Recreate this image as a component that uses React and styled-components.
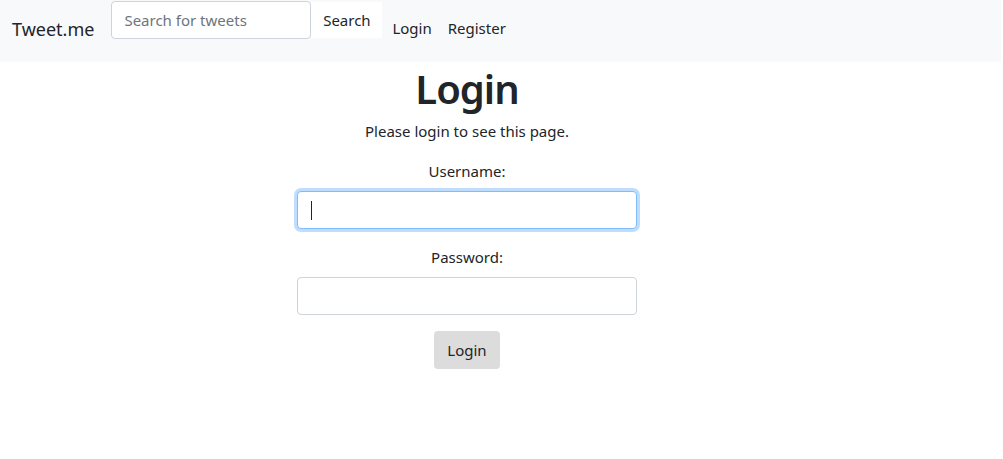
import React from "react";
import styled, { createGlobalStyle } from "styled-components";

const Global = createGlobalStyle`
  html, body { margin: 0; padding: 0; background: #fff; }
  body {
    font-family: "Noto Sans", "Liberation Sans", sans-serif;
    font-size: 15px;
    color: #212529;
  }
  * { box-sizing: border-box; }
`;

const Navbar = styled.nav`
  display: flex;
  align-items: flex-start;
  height: 62px;
  width: 1001px;
  background: #f8f9fa;
  padding: 1px 12px 0;
`;

const Brand = styled.a`
  font-size: 18px;
  color: #212529;
  text-decoration: none;
  margin-top: 16px;
  margin-right: 17px;
`;

const SearchForm = styled.form`
  display: flex;
  align-items: flex-start;
`;

const SearchInput = styled.input`
  width: 200px;
  height: 38px;
  border: 1px solid #ced4da;
  border-radius: 4px;
  padding: 0 12px;
  font-family: inherit;
  font-size: 15px;
  color: #495057;
  background: #fff;
  outline: none;
  &::placeholder { color: #6c757d; }
`;

const SearchButton = styled.button`
  height: 36px;
  margin-top: 1px;
  width: 71px;
  border: none;
  background: #fff;
  font-family: inherit;
  font-size: 15px;
  color: #212529;
  padding: 0;
`;

const NavLinks = styled.div`
  display: flex;
  gap: 16px;
  margin-top: 17px;
  margin-left: 10px;
`;

const NavLink = styled.a`
  font-size: 15px;
  color: #212529;
  text-decoration: none;
`;

const Main = styled.main`
  width: 934px;
  display: flex;
  flex-direction: column;
  align-items: center;
  text-align: center;
`;

const Title = styled.h1`
  font-size: 40px;
  font-weight: 600;
  letter-spacing: -1px;
  line-height: 1.2;
  margin: 3px 0 7px;
`;

const Lead = styled.p`
  margin: 0 0 17px;
  line-height: 1.5;
`;

const Field = styled.div`
  display: flex;
  flex-direction: column;
  align-items: center;
  margin-bottom: ${p => (p.$last ? "16px" : "17px")};
`;

const Label = styled.label`
  line-height: 1.5;
  margin-bottom: ${p => (p.$tight ? "8px" : "9px")};
`;

const TextInput = styled.input`
  width: 340px;
  height: 38px;
  border: 1px solid ${p => (p.$focused ? "#80bdff" : "#ced4da")};
  border-radius: 4px;
  box-shadow: ${p => (p.$focused ? "0 0 0 3px rgba(0,123,255,.25)" : "none")};
  padding: 0 12px;
  font-family: inherit;
  font-size: 15px;
  outline: none;
  background: #fff;
`;

const Caret = styled.span`
  position: absolute;
  left: 14px;
  top: 10px;
  width: 1px;
  height: 19px;
  background: #212529;
`;

const InputWrap = styled.div`
  position: relative;
`;

const SubmitButton = styled.button`
  height: 38px;
  width: 66px;
  border: none;
  border-radius: 4px;
  background: #dcdcdc;
  font-family: inherit;
  font-size: 15px;
  color: #212529;
`;

export default function App() {
  return (
    <>
      <Global />
      <Navbar>
        <Brand href="#">Tweet.me</Brand>
        <SearchForm onSubmit={e => e.preventDefault()}>
          <SearchInput placeholder="Search for tweets" />
          <SearchButton type="button">Search</SearchButton>
        </SearchForm>
        <NavLinks>
          <NavLink href="#">Login</NavLink>
          <NavLink href="#">Register</NavLink>
        </NavLinks>
      </Navbar>
      <Main>
        <Title>Login</Title>
        <Lead>Please login to see this page.</Lead>
        <Field>
          <Label>Username:</Label>
          <InputWrap>
            <TextInput $focused type="text" />
            <Caret />
          </InputWrap>
        </Field>
        <Field $last>
          <Label $tight>Password:</Label>
          <TextInput type="password" />
        </Field>
        <SubmitButton type="button">Login</SubmitButton>
      </Main>
    </>
  );
}
